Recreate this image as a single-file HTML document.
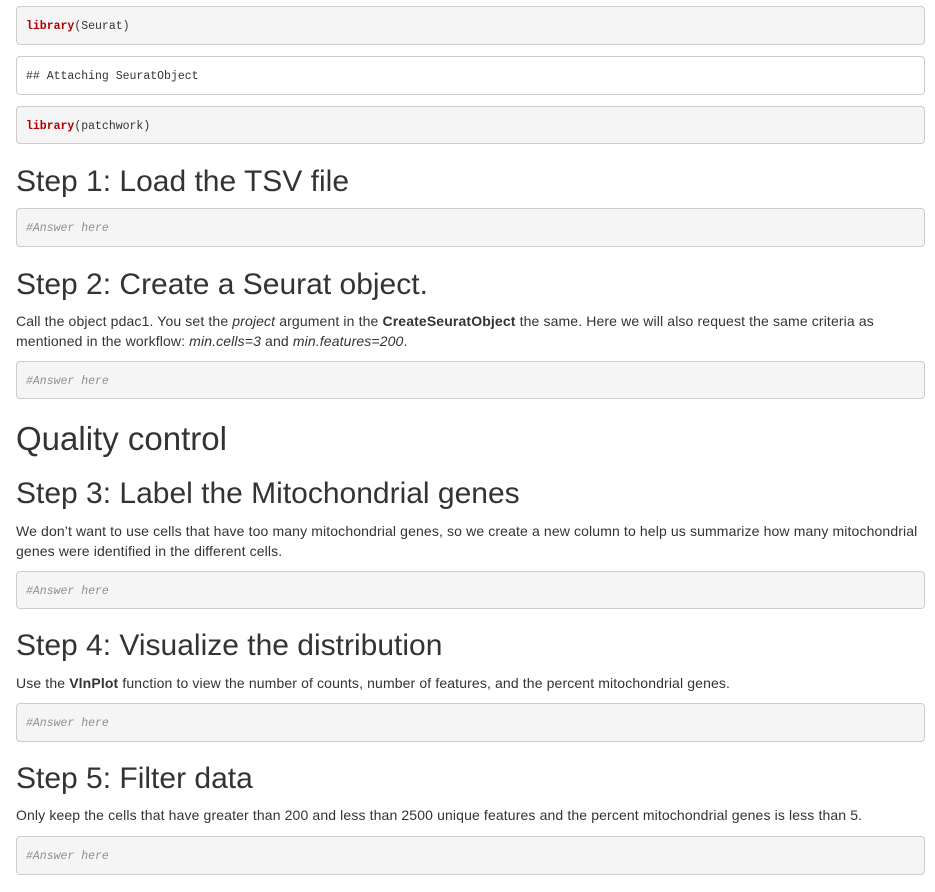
<!DOCTYPE html>
<html><head><style>
body{margin:0;width:935px;height:892px;background:#fff;font-family:"Liberation Sans",Arial,sans-serif;color:#333;position:relative;overflow:hidden}
.b{position:absolute;left:16px;height:37px;background:#f5f5f5;border:1px solid #ccc;border-radius:4px;font-family:"Liberation Mono",monospace;font-size:11.5px;line-height:40px;box-sizing:content-box;padding:0 0 0 9px;width:898px}
.w{background:#fff}
.k{color:#a00;font-weight:bold}
.c{color:#8f8f8f;font-style:italic}
h1,h2{position:absolute;left:16px;margin:0;font-weight:normal;white-space:nowrap}
h2{font-size:30px;line-height:34px}
h1{font-size:33px;line-height:40px}
p{position:absolute;left:16px;margin:0;font-size:14px;line-height:20px;width:905px;letter-spacing:0.13px}
</style></head><body>
<div class="b" style="top:6px"><span class="k">library</span>(Seurat)</div>
<div class="b w" style="top:56px">## Attaching SeuratObject</div>
<div class="b" style="top:106px;height:36px"><span class="k">library</span>(patchwork)</div>
<h2 style="top:165px">Step 1: Load the TSV file</h2>
<div class="b" style="top:208px"><span class="c">#Answer here</span></div>
<h2 style="top:268px">Step 2: Create a Seurat object.</h2>
<p style="top:311px">Call the object pdac1. You set the <i>project</i> argument in the <b>CreateSeuratObject</b> the same. Here we will also request the same criteria as mentioned in the workflow: <i>min.cells=3</i> and <i>min.features=200</i>.</p>
<div class="b" style="top:361px;height:36px"><span class="c">#Answer here</span></div>
<h1 style="top:419px">Quality control</h1>
<h2 style="top:477px">Step 3: Label the Mitochondrial genes</h2>
<p style="top:521px">We don’t want to use cells that have too many mitochondrial genes, so we create a new column to help us summarize how many mitochondrial genes were identified in the different cells.</p>
<div class="b" style="top:571px;height:36px"><span class="c">#Answer here</span></div>
<h2 style="top:629px">Step 4: Visualize the distribution</h2>
<p style="top:673px">Use the <b>VlnPlot</b> function to view the number of counts, number of features, and the percent mitochondrial genes.</p>
<div class="b" style="top:703px"><span class="c">#Answer here</span></div>
<h2 style="top:762px">Step 5: Filter data</h2>
<p style="top:805px">Only keep the cells that have greater than 200 and less than 2500 unique features and the percent mitochondrial genes is less than 5.</p>
<div class="b" style="top:836px"><span class="c">#Answer here</span></div>
</body></html>
